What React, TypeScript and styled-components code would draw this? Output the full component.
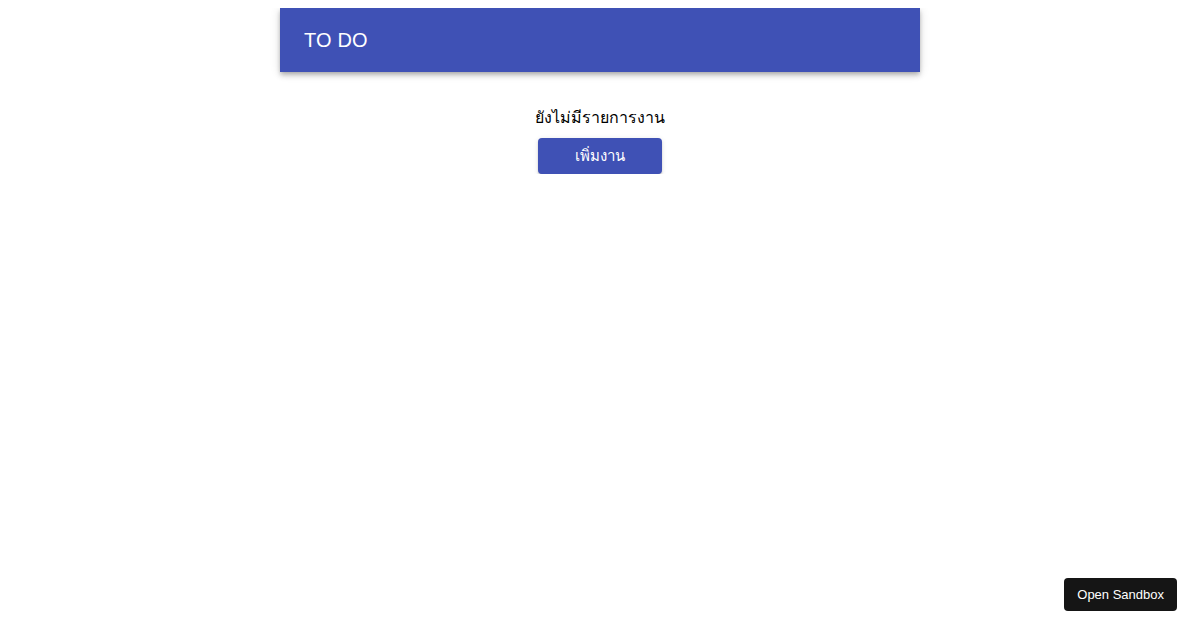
import React from "react";
import styled, { createGlobalStyle } from "styled-components";

const GlobalStyle = createGlobalStyle`
    body {
        margin: 8px;
        background: #ffffff;
        font-family: "Liberation Sans", Roboto, sans-serif;
    }
`;

const Page = styled.div`
    max-width: 640px;
    margin: 0 auto;
    display: flex;
    flex-direction: column;
    align-items: center;
`;

const AppBar = styled.header`
    width: 100%;
    height: 64px;
    box-sizing: border-box;
    padding: 0 24px;
    display: flex;
    align-items: center;
    background: #3f51b5;
    color: #ffffff;
    box-shadow: 0px 2px 4px -1px rgba(0,0,0,0.2), 0px 4px 5px 0px rgba(0,0,0,0.14), 0px 1px 10px 0px rgba(0,0,0,0.12);
`;

const Title = styled.h1`
    margin: 0;
    font-size: 20px;
    font-weight: 400;
    letter-spacing: 0.15px;
`;

const Empty = styled.div`
    margin-top: 34px;
    display: flex;
    flex-direction: column;
    align-items: center;
    gap: 8px;
`;

const Message = styled.p`
    margin: 0;
    font-size: 16px;
    line-height: 24px;
    color: #000000;
`;

const AddButton = styled.button`
    height: 36px;
    min-width: 124px;
    padding: 6px 16px;
    border: 0;
    border-radius: 4px;
    background: #3f51b5;
    color: #ffffff;
    font-family: "Liberation Sans", sans-serif;
    font-size: 15px;
    font-weight: 500;
    cursor: pointer;
    box-shadow: 0px 3px 1px -2px rgba(0,0,0,0.2), 0px 2px 2px 0px rgba(0,0,0,0.14), 0px 1px 5px 0px rgba(0,0,0,0.12);
`;

const SandboxLink = styled.a`
    position: fixed;
    right: 23px;
    bottom: 19px;
    height: 33px;
    padding: 0 13px;
    display: flex;
    align-items: center;
    border-radius: 4px;
    background: #151515;
    color: #ffffff;
    font-family: "Liberation Sans", sans-serif;
    font-size: 13px;
    text-decoration: none;
`;

export default function App() {
    return (
        <>
            <GlobalStyle />
            <Page>
                <AppBar>
                    <Title>TO DO</Title>
                </AppBar>
                <Empty>
                    <Message>ยังไม่มีรายการงาน</Message>
                    <AddButton>เพิ่มงาน</AddButton>
                </Empty>
            </Page>
            <SandboxLink href="#">Open Sandbox</SandboxLink>
        </>
    );
}
